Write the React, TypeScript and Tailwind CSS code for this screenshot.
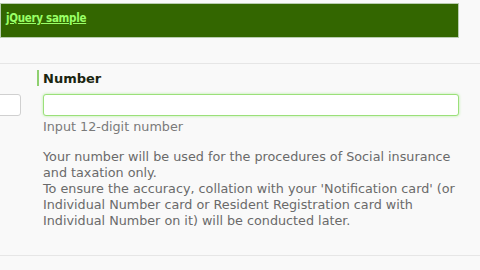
export default function App() {
  return (
    <div className="w-[480px] h-[270px] overflow-hidden bg-[#f9f9f9] font-['DejaVu_Sans',Verdana,sans-serif]">
      {/* Header */}
      <div className="pt-[3px]">
        <div className="w-[459px] h-[35px] bg-[#336600] border border-[#b9cdb0] flex items-center px-[5px] pb-[4px]">
          <a
            href="#"
            className="text-[11.5px] font-bold text-[#99ff66] underline font-['DejaVu_Sans_Condensed','DejaVu_Sans',sans-serif] tracking-[-0.3px]"
          >
            jQuery sample
          </a>
        </div>
      </div>

      {/* Form row */}
      <div className="mt-[25px] border-t border-[#e6e6e6] h-[193px] border-b flex">
        <div className="w-[37px] pt-[30px] overflow-hidden">
          <div className="w-[60px] h-[22px] -ml-[39px] bg-white border border-[#d0d0d0] rounded-[3px]" />
        </div>
        <div className="flex-1 pt-[6px]">
          <div className="h-[16px] border-l-2 border-[#8fd070] pl-[4px] flex items-center">
            <span className="text-[13px] font-bold text-[#1a2510] leading-none">Number</span>
          </div>
          <div className="mt-[8px] ml-[6px] w-[416px] h-[22px] bg-white border border-[#9be07a] rounded-[3px] shadow-[0_0_3px_#b6eea0]" />
          <p className="ml-[6px] mt-[3px] text-[12.75px] leading-[16px] text-[#7a7a7a]">Input 12-digit number</p>
          <p className="ml-[6px] mt-[14px] w-[416px] text-[12.75px] leading-[16px] text-[#6a6a6a]">
            Your number will be used for the procedures of Social insurance and taxation only.
            <br />
            To ensure the accuracy, collation with your 'Notification card' (or Individual Number card or Resident Registration card with Individual Number on it) will be conducted later.
          </p>
        </div>
      </div>
    </div>
  );
}
